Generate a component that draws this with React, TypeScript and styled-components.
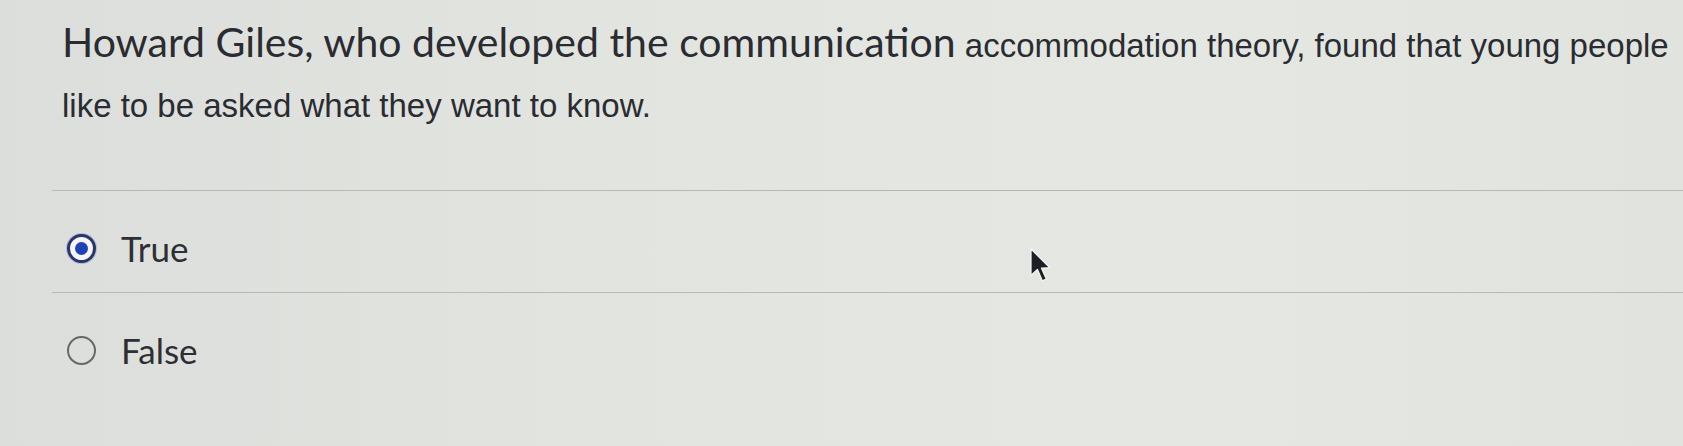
import styled, { createGlobalStyle } from 'styled-components';

const GlobalStyle = createGlobalStyle`
  html,
  body {
    margin: 0;
    padding: 0;
  }
  body {
    background: #e0e2de;
  }
`;

const StyledPage = styled.div`
  position: relative;
  width: 100%;
  height: 446px;
  overflow: hidden;
  background: linear-gradient(90deg, #dcdedb 0%, #e2e4e0 35%, #e5e7e3 70%, #e1e3df 100%);
  color: #2a2c31;
`;

const StyledQuestion = styled.p`
  margin: 0;
  padding: 12px 0 0 62px;
  font-family: 'Liberation Sans', Arial, sans-serif;
  font-size: 33px;
  line-height: 60px;
  white-space: nowrap;
`;

const StyledLead = styled.span`
  font-family: Lato, 'Open Sans', sans-serif;
  font-size: 41px;
`;

const StyledOptionList = styled.div`
  display: flex;
  flex-direction: column;
  margin: 54px 0 0 52px;
`;

const StyledOptionRow = styled.label`
  box-sizing: border-box;
  display: flex;
  align-items: center;
  gap: 25px;
  height: 102px;
  padding: 13px 0 0 15px;
  border-top: 1px solid #b6b9b5;
`;

interface radioType {
  checked: boolean;
}

const StyledRadio = styled.span<radioType>`
  box-sizing: border-box;
  display: flex;
  align-items: center;
  justify-content: center;
  width: 29px;
  height: 29px;
  border-radius: 50%;
  border: ${(props) => (props.checked ? '3px solid #2b3566' : '2.5px solid #66686b')};
  background: ${(props) => (props.checked ? '#f4f6fb' : 'transparent')};
  box-shadow: ${(props) => (props.checked ? '0 0 0 1px rgba(110, 140, 220, 0.45)' : 'none')};
`;

const StyledRadioDot = styled.span`
  width: 13px;
  height: 13px;
  border-radius: 50%;
  background: #1f43b6;
`;

const StyledOptionLabel = styled.span`
  font-family: Lato, 'Open Sans', sans-serif;
  font-size: 35px;
  line-height: 1;
  color: #2d2f34;
`;

const StyledCursor = styled.svg`
  position: absolute;
  left: 1029px;
  top: 247px;
`;

const options = [
  { label: 'True', checked: true },
  { label: 'False', checked: false },
];

export default function App() {
  return (
    <>
      <GlobalStyle />
      <StyledPage>
        <StyledQuestion>
          <StyledLead>Howard Giles, who developed the communication</StyledLead>{' '}
          accommodation theory, found that young people
          <br />
          like to be asked what they want to know.
        </StyledQuestion>
        <StyledOptionList>
          {options.map((option) => (
            <StyledOptionRow key={option.label}>
              <StyledRadio checked={option.checked}>
                {option.checked ? <StyledRadioDot /> : null}
              </StyledRadio>
              <StyledOptionLabel>{option.label}</StyledOptionLabel>
            </StyledOptionRow>
          ))}
        </StyledOptionList>
        <StyledCursor width="24" height="38" viewBox="0 0 20 32">
          <path
            d="M1.5 1.5 L1.5 24 L7 19 L11 28.5 L14.5 27 L10.5 17.8 L17.5 17.5 Z"
            fill="#1d1f24"
            stroke="#f2f3f1"
            strokeWidth="1.2"
            strokeLinejoin="round"
          />
        </StyledCursor>
      </StyledPage>
    </>
  );
}
